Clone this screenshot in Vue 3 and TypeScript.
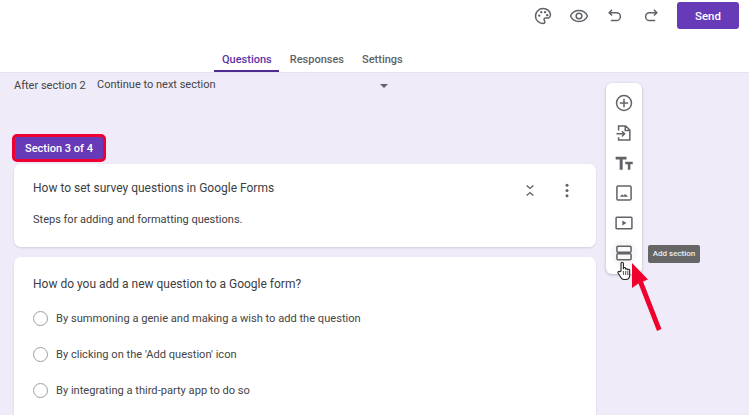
<script setup lang="ts">
const tabs = ["Questions", "Responses", "Settings"];
const options = [
  "By summoning a genie and making a wish to add the question",
  "By clicking on the 'Add question' icon",
  "By integrating a third-party app to do so",
];
</script>

<template>
  <div class="page">
    <header class="header">
      <div class="actions">
        <svg class="act" viewBox="0 0 24 24"><path d="M12 3a9 9 0 0 0 0 18c1.400 0 2.200-1 2.200-2.100 0-.6-.2-1-.5-1.400-.3-.4-.5-.8-.5-1.300 0-1 .8-1.700 1.800-1.700H17c2.200 0 4-1.800 4-4C21 6.300 17 3 12 3z" fill="none" stroke="#5f6368" stroke-width="1.800"/><circle cx="7.500" cy="11.500" r="1.400" fill="#5f6368"/><circle cx="10" cy="7.500" r="1.400" fill="#5f6368"/><circle cx="14.500" cy="7.500" r="1.400" fill="#5f6368"/><circle cx="17" cy="11" r="1.400" fill="#5f6368"/></svg>
        <svg class="act" viewBox="0 0 24 24"><path d="M1.800 12C3.700 8 7.500 5.500 12 5.500S20.300 8 22.200 12c-1.900 4-5.700 6.500-10.200 6.500S3.700 16 1.800 12z" fill="none" stroke="#5f6368" stroke-width="1.800"/><circle cx="12" cy="12" r="3.400" fill="none" stroke="#5f6368" stroke-width="1.800"/></svg>
        <svg class="act" viewBox="0 0 24 24"><path d="M8.500 4.500 5 8l3.500 3.500M5.500 8h8.200a4.700 4.700 0 0 1 0 9.500H7" fill="none" stroke="#5f6368" stroke-width="1.800"/></svg>
        <svg class="act" viewBox="0 0 24 24"><path d="M15.500 4.500 19 8l-3.500 3.500M18.500 8h-8.200a4.700 4.700 0 0 0 0 9.500H17" fill="none" stroke="#5f6368" stroke-width="1.800"/></svg>
        <button class="send">Send</button>
      </div>
      <nav class="tabs">
        <span v-for="(t, i) in tabs" :key="t" class="tab" :class="{ active: i === 0 }">{{ t }}</span>
      </nav>
    </header>

    <main class="main">
      <div class="column">
        <div class="after">
          <span class="after-label">After section 2</span>
          <div class="select">
            <span>Continue to next section</span>
            <i class="caret"></i>
          </div>
        </div>

        <div class="section-tag">Section 3 of 4</div>

        <section class="card title-card">
          <div class="title-row">
            <span class="title">How to set survey questions in Google Forms</span>
            <svg class="collapse" viewBox="0 0 12 16"><path d="M2 2l4 3.500L10 2M2 14l4-3.500 4 3.500" fill="none" stroke="#5f6368" stroke-width="1.700"/></svg>
            <svg class="more" viewBox="0 0 4 16"><circle cx="2" cy="2.500" r="1.600" fill="#5f6368"/><circle cx="2" cy="8" r="1.600" fill="#5f6368"/><circle cx="2" cy="13.500" r="1.600" fill="#5f6368"/></svg>
          </div>
          <p class="desc">Steps for adding and formatting questions.</p>
        </section>

        <section class="card question">
          <div class="q-title">How do you add a new question to a Google form?</div>
          <label v-for="o in options" :key="o" class="option">
            <span class="radio"></span>
            <span>{{ o }}</span>
          </label>
        </section>
      </div>

      <aside class="toolbar">
        <svg class="tool" viewBox="0 0 24 24"><circle cx="12" cy="12" r="9" fill="none" stroke="#5f6368" stroke-width="1.800"/><path d="M12 7v10M7 12h10" stroke="#5f6368" stroke-width="1.800"/></svg>
        <svg class="tool" viewBox="0 0 24 24"><path d="M5.500 9V3.500H14L19 8.500V20.500H5.500V17M13.500 3.500V9H19" fill="none" stroke="#5f6368" stroke-width="1.800"/><path d="M3 13h9.500M9.500 9.800l3.200 3.200-3.200 3.200" fill="none" stroke="#5f6368" stroke-width="1.800"/></svg>
        <svg class="tool" viewBox="0 0 24 24"><path d="M2 4.500h13v3.200H10.400V20H6.800V7.700H2zM13.500 10.500h9v2.900h-2.900V20h-3v-6.600h-3.100z" fill="#5f6368"/></svg>
        <svg class="tool" viewBox="0 0 24 24"><rect x="3.500" y="3.500" width="17" height="17" rx="1.500" fill="none" stroke="#5f6368" stroke-width="1.800"/><path d="M7 16.500l2.800-3 1.700 1.700 1.800-2 3.700 3.300z" fill="#5f6368"/></svg>
        <svg class="tool" viewBox="0 0 24 24"><rect x="2.500" y="5" width="19" height="14" rx="1" fill="none" stroke="#5f6368" stroke-width="1.800"/><path d="M10 9l5 3-5 3z" fill="#5f6368"/></svg>
        <div class="tool-active">
          <svg class="tool" viewBox="0 0 24 24"><rect x="3.500" y="4" width="17" height="7" rx="1" fill="none" stroke="#5f6368" stroke-width="1.800"/><rect x="3.500" y="13" width="17" height="7" rx="1" fill="none" stroke="#5f6368" stroke-width="1.800"/></svg>
        </div>
      </aside>

      <span class="tooltip">Add section</span>

      <svg class="hand" viewBox="0 0 16 20"><path d="M5 10V2.500a1.200 1.200 0 0 1 2.400 0V8l.3-1a1.100 1.100 0 0 1 2 .3V8.500a1.100 1.100 0 0 1 2-.1v.8a1 1 0 0 1 2 .1V14c0 2.500-1.500 4.500-3.800 4.500H8c-1.500 0-2.400-.7-3.100-2L2 12c-.6-1 .8-2.200 1.800-1.200z" fill="#fff" stroke="#222" stroke-width="1.100"/><path d="M7.400 10v4M9.700 10v4M11.800 10v4" stroke="#222" stroke-width=".8"/></svg>

      <svg class="arrow" viewBox="0 0 32 70"><path d="M2 0 2 25l6.500-4.500L27 68l4.500-2L13 18.500l5-2z" fill="#f0002c"/></svg>
    </main>
  </div>
</template>

<style scoped>
.page {
  width: 749px;
  height: 415px;
  overflow: hidden;
  display: flex;
  flex-direction: column;
  font-family: Roboto, "Liberation Sans", sans-serif;
  color: #3c4043;
}

.header {
  height: 73px;
  flex: none;
  background: #fff;
  border-bottom: 1px solid #e6e3ee;
  box-sizing: border-box;
}

.actions {
  height: 31px;
  padding-right: 10px;
  display: flex;
  align-items: center;
  justify-content: flex-end;
}

.act {
  width: 20px;
  height: 20px;
  margin-right: 16px;
}

.send {
  width: 62px;
  height: 27px;
  border: none;
  border-radius: 3px;
  background: #673ab7;
  color: #fff;
  font: 500 11.500px Roboto, "Liberation Sans", sans-serif;
}

.tabs {
  display: flex;
  gap: 16px;
  margin-top: 20px;
  padding-left: 214px;
}

.tab {
  font-size: 11px;
  font-weight: 500;
  color: #5f6368;
  height: 21px;
  line-height: 18px;
  padding: 0 1px;
  box-sizing: border-box;
}

.tab.active {
  color: #5e35a6;
  border-bottom: 2px solid #4d2c91;
  padding: 0 7px 0 8px;
  margin-right: -6px;
}

.main {
  position: relative;
  flex: 1;
  display: flex;
  align-items: flex-start;
  background: #efebf8;
  min-height: 0;
}

.column {
  width: 582px;
  margin-left: 14px;
  flex: none;
}

.after {
  display: flex;
  font-size: 11px;
  height: 61px;
  padding-top: 5px;
  box-sizing: border-box;
  color: #444;
}

.after-label {
  width: 83px;
  padding-top: 1px;
  flex: none;
}

.select {
  width: 291px;
  display: flex;
  justify-content: space-between;
}

.caret {
  margin-top: 6px;
  width: 0;
  height: 0;
  border-left: 4px solid transparent;
  border-right: 4px solid transparent;
  border-top: 4px solid #5f6368;
}

.section-tag {
  width: 88px;
  height: 22px;
  line-height: 24px;
  text-align: center;
  background: #673ab7;
  color: #fff;
  font-size: 11px;
  font-weight: 500;
  border: 3px solid #ee0033;
  border-radius: 5px;
  margin: 0 0 2px -2px;
}

.card {
  background: #fff;
  border-radius: 7px;
  box-shadow: 0 1px 2px rgba(60, 50, 90, 0.15);
}

.title-card {
  height: 83px;
  padding: 16px 18px 0 19px;
  box-sizing: border-box;
  margin-bottom: 10px;
}

.title-row {
  display: flex;
  align-items: center;
  height: 16px;
}

.title {
  flex: 1;
  font-size: 12px;
  color: #3c4043;
}

.collapse {
  width: 10px;
  height: 15px;
  margin: 4px 30px 0 0;
}

.more {
  width: 4px;
  height: 15px;
  margin: 4px 9px 0 0;
}

.desc {
  margin: 17px 0 0;
  font-size: 11px;
  color: #3c4043;
}

.question {
  height: 170px;
  padding: 20px 19px;
  box-sizing: border-box;
}

.q-title {
  font-size: 12px;
  line-height: 15px;
  margin-bottom: 8px;
}

.option {
  display: flex;
  align-items: center;
  gap: 8px;
  height: 36px;
  font-size: 11.100px;
  color: #444;
}

.radio {
  width: 13px;
  height: 13px;
  border: 1.500px solid #9aa0a6;
  border-radius: 50%;
  flex: none;
}

.toolbar {
  position: absolute;
  left: 606px;
  top: 10px;
  width: 36px;
  height: 191px;
  box-sizing: border-box;
  padding-top: 10px;
  background: #fff;
  border-radius: 6px;
  box-shadow: 0 1px 3px rgba(60, 50, 90, 0.3);
  display: flex;
  flex-direction: column;
  align-items: center;
  gap: 10px;
}

.tool {
  width: 20px;
  height: 20px;
  flex: none;
  display: block;
}

.tool-active {
  width: 26px;
  height: 26px;
  margin-top: -3px;
  border-radius: 50%;
  background: #f8f8f8;
  display: flex;
  align-items: center;
  justify-content: center;
}

.tooltip {
  position: absolute;
  left: 648px;
  top: 172px;
  width: 52px;
  height: 18px;
  line-height: 18px;
  text-align: center;
  background: #666;
  color: #eee;
  font-size: 8px;
  font-weight: 500;
  border-radius: 2px;
}

.hand {
  position: absolute;
  left: 616px;
  top: 188px;
  width: 16px;
  height: 20px;
}

.arrow {
  position: absolute;
  left: 630px;
  top: 190px;
  width: 32px;
  height: 70px;
}
</style>

<style>
html,
body {
  margin: 0;
}
</style>
